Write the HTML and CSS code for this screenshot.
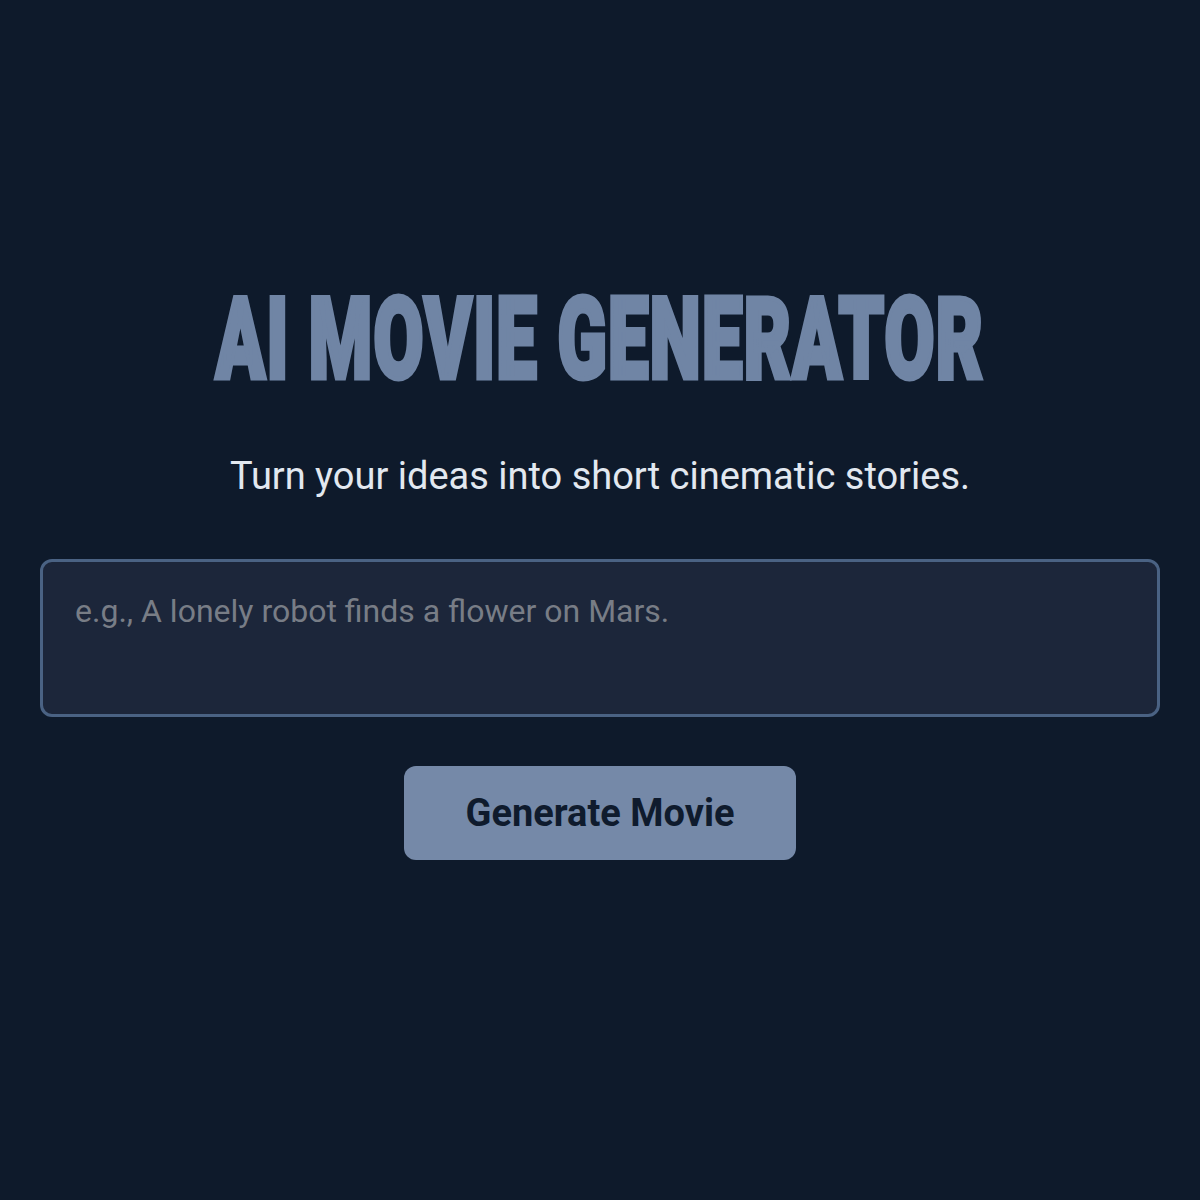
FILE: index.html
```html
<!DOCTYPE html>
<html lang="en">
<head>
<meta charset="utf-8">
<title>AI Movie Generator</title>
<link rel="stylesheet" href="styles.css">
</head>
<body>
<main class="page">
  <h1 class="title"><span class="title-text">AI MOVIE GENERATOR</span></h1>
  <p class="subtitle">Turn your ideas into short cinematic stories.</p>
  <textarea class="prompt" placeholder="e.g., A lonely robot finds a flower on Mars."></textarea>
  <button class="generate" type="button">Generate Movie</button>
</main>
</body>
</html>
```

FILE: styles.css
```css
html, body {
  margin: 0;
  padding: 0;
  background: #0e1a2b;
  height: 100%;
}
body {
  font-family: Roboto, "Noto Sans", sans-serif;
}
.page {
  box-sizing: border-box;
  min-height: 100vh;
  padding: 282px 40px 0;
  display: flex;
  flex-direction: column;
  align-items: center;
}
.title {
  margin: 0;
  line-height: 1;
  font-size: 114px;
  font-weight: 900;
  color: #7085a5;
  white-space: nowrap;
}
.title-text {
  display: inline-block;
  transform: scaleX(0.635);
  -webkit-text-stroke: 5px #7085a5;
  letter-spacing: 2px;
}
.subtitle {
  margin: 58px 0 0;
  font-size: 38px;
  color: #e2e8f0;
}
.prompt {
  box-sizing: border-box;
  display: block;
  margin-top: 61px;
  width: 100%;
  height: 158px;
  padding: 30px 32px;
  resize: none;
  background: #1c263a;
  border: 3px solid #4a6283;
  border-radius: 12px;
  color: #e2e8f0;
  font-family: Roboto, "Noto Sans", sans-serif;
  font-size: 32px;
  outline: none;
}
.prompt::placeholder {
  color: #787d86;
}
.generate {
  margin-top: 49px;
  width: 392px;
  height: 94px;
  border: none;
  border-radius: 12px;
  background: #7589a8;
  color: #0f1b2d;
  font-family: Roboto, "Noto Sans", sans-serif;
  font-size: 38px;
  font-weight: 700;
}
```
